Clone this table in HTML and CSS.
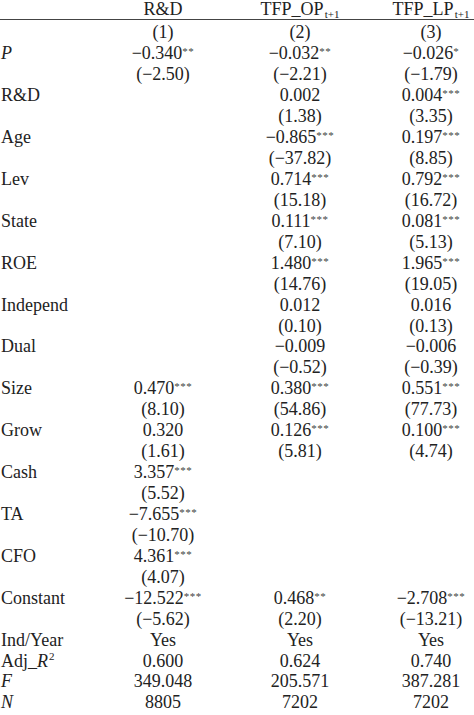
FILE: index.html
```html
<!DOCTYPE html>
<html>
<head>
<meta charset="utf-8">
<link rel="stylesheet" href="styles.css">
</head>
<body>
<div class="table">
  <div class="row head">
    <div class="lab"></div>
    <div class="c">R&amp;D</div>
    <div class="c">TFP_OP<span class="sub">t+1</span></div>
    <div class="c">TFP_LP<span class="sub">t+1</span></div>
  </div>
  <div class="body">
    <div class="row"><div class="lab"></div><div class="c">(1)</div><div class="c">(2)</div><div class="c">(3)</div></div>
    <div class="row"><div class="lab"><i>P</i></div><div class="c">−0.340<span class="st">**</span></div><div class="c">−0.032<span class="st">**</span></div><div class="c">−0.026<span class="st">*</span></div></div>
    <div class="row"><div class="lab"></div><div class="c">(−2.50)</div><div class="c">(−2.21)</div><div class="c">(−1.79)</div></div>
    <div class="row"><div class="lab">R&amp;D</div><div class="c"></div><div class="c">0.002</div><div class="c">0.004<span class="st">***</span></div></div>
    <div class="row"><div class="lab"></div><div class="c"></div><div class="c">(1.38)</div><div class="c">(3.35)</div></div>
    <div class="row"><div class="lab">Age</div><div class="c"></div><div class="c">−0.865<span class="st">***</span></div><div class="c">0.197<span class="st">***</span></div></div>
    <div class="row"><div class="lab"></div><div class="c"></div><div class="c">(−37.82)</div><div class="c">(8.85)</div></div>
    <div class="row"><div class="lab">Lev</div><div class="c"></div><div class="c">0.714<span class="st">***</span></div><div class="c">0.792<span class="st">***</span></div></div>
    <div class="row"><div class="lab"></div><div class="c"></div><div class="c">(15.18)</div><div class="c">(16.72)</div></div>
    <div class="row"><div class="lab">State</div><div class="c"></div><div class="c">0.111<span class="st">***</span></div><div class="c">0.081<span class="st">***</span></div></div>
    <div class="row"><div class="lab"></div><div class="c"></div><div class="c">(7.10)</div><div class="c">(5.13)</div></div>
    <div class="row"><div class="lab">ROE</div><div class="c"></div><div class="c">1.480<span class="st">***</span></div><div class="c">1.965<span class="st">***</span></div></div>
    <div class="row"><div class="lab"></div><div class="c"></div><div class="c">(14.76)</div><div class="c">(19.05)</div></div>
    <div class="row"><div class="lab">Independ</div><div class="c"></div><div class="c">0.012</div><div class="c">0.016</div></div>
    <div class="row"><div class="lab"></div><div class="c"></div><div class="c">(0.10)</div><div class="c">(0.13)</div></div>
    <div class="row"><div class="lab">Dual</div><div class="c"></div><div class="c">−0.009</div><div class="c">−0.006</div></div>
    <div class="row"><div class="lab"></div><div class="c"></div><div class="c">(−0.52)</div><div class="c">(−0.39)</div></div>
    <div class="row"><div class="lab">Size</div><div class="c">0.470<span class="st">***</span></div><div class="c">0.380<span class="st">***</span></div><div class="c">0.551<span class="st">***</span></div></div>
    <div class="row"><div class="lab"></div><div class="c">(8.10)</div><div class="c">(54.86)</div><div class="c">(77.73)</div></div>
    <div class="row"><div class="lab">Grow</div><div class="c">0.320</div><div class="c">0.126<span class="st">***</span></div><div class="c">0.100<span class="st">***</span></div></div>
    <div class="row"><div class="lab"></div><div class="c">(1.61)</div><div class="c">(5.81)</div><div class="c">(4.74)</div></div>
    <div class="row"><div class="lab">Cash</div><div class="c">3.357<span class="st">***</span></div><div class="c"></div><div class="c"></div></div>
    <div class="row"><div class="lab"></div><div class="c">(5.52)</div><div class="c"></div><div class="c"></div></div>
    <div class="row"><div class="lab">TA</div><div class="c">−7.655<span class="st">***</span></div><div class="c"></div><div class="c"></div></div>
    <div class="row"><div class="lab"></div><div class="c">(−10.70)</div><div class="c"></div><div class="c"></div></div>
    <div class="row"><div class="lab">CFO</div><div class="c">4.361<span class="st">***</span></div><div class="c"></div><div class="c"></div></div>
    <div class="row"><div class="lab"></div><div class="c">(4.07)</div><div class="c"></div><div class="c"></div></div>
    <div class="row"><div class="lab">Constant</div><div class="c">−12.522<span class="st">***</span></div><div class="c">0.468<span class="st">**</span></div><div class="c">−2.708<span class="st">***</span></div></div>
    <div class="row"><div class="lab"></div><div class="c">(−5.62)</div><div class="c">(2.20)</div><div class="c">(−13.21)</div></div>
    <div class="row"><div class="lab">Ind/Year</div><div class="c">Yes</div><div class="c">Yes</div><div class="c">Yes</div></div>
    <div class="row"><div class="lab">Adj_<i>R</i><span class="sup">2</span></div><div class="c">0.600</div><div class="c">0.624</div><div class="c">0.740</div></div>
    <div class="row"><div class="lab"><i>F</i></div><div class="c">349.048</div><div class="c">205.571</div><div class="c">387.281</div></div>
    <div class="row"><div class="lab"><i>N</i></div><div class="c">8805</div><div class="c">7202</div><div class="c">7202</div></div>
  </div>
</div>
</body>
</html>
```

FILE: styles.css
```css
html, body {
  margin: 0;
  padding: 0;
  overflow: hidden;
  background: #ffffff;
}

body {
  font-family: "Liberation Serif", "Times New Roman", serif;
  font-size: 18px;
  color: #222222;
}

.table {
  width: 488px;
}

.row {
  display: grid;
  grid-template-columns: 100px 126px 148px 114px;
  line-height: 20.95px;
  height: 20.95px;
  white-space: nowrap;
}

.lab {
  text-align: left;
  padding-left: 1px;
}

.c {
  text-align: center;
}

.head {
  line-height: 18px;
  height: 18px;
  padding-bottom: 1px;
  border-bottom: 1.6px solid #444444;
}

.body {
  padding-top: 2.4px;
}

.sub {
  font-size: 11px;
  line-height: 0;
  vertical-align: -3px;
  margin-left: 1px;
}

.sup {
  font-size: 11px;
  line-height: 0;
  vertical-align: 7px;
  margin-left: 1px;
}

.st {
  font-size: 11px;
  line-height: 0;
  vertical-align: 4px;
  letter-spacing: 0.5px;
  color: #444444;
}
```
